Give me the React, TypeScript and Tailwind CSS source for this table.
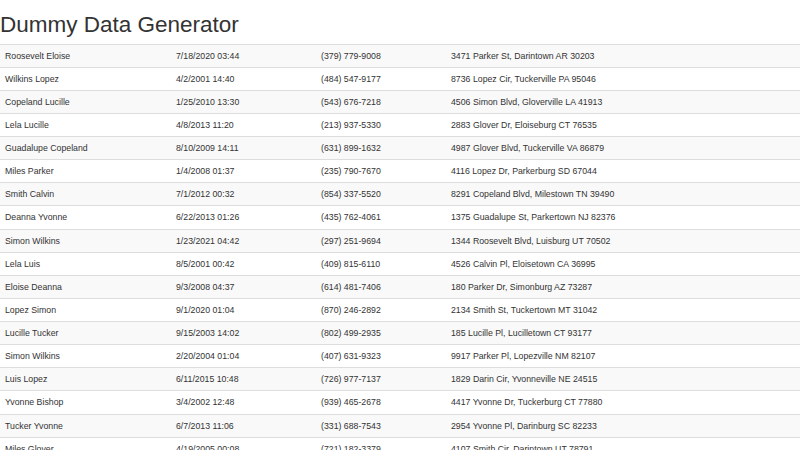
const rows: [string, string, string, string][] = [
  ["Roosevelt Eloise", "7/18/2020 03:44", "(379) 779-9008", "3471 Parker St, Darintown AR 30203"],
  ["Wilkins Lopez", "4/2/2001 14:40", "(484) 547-9177", "8736 Lopez Cir, Tuckerville PA 95046"],
  ["Copeland Lucille", "1/25/2010 13:30", "(543) 676-7218", "4506 Simon Blvd, Gloverville LA 41913"],
  ["Lela Lucille", "4/8/2013 11:20", "(213) 937-5330", "2883 Glover Dr, Eloiseburg CT 76535"],
  ["Guadalupe Copeland", "8/10/2009 14:11", "(631) 899-1632", "4987 Glover Blvd, Tuckerville VA 86879"],
  ["Miles Parker", "1/4/2008 01:37", "(235) 790-7670", "4116 Lopez Dr, Parkerburg SD 67044"],
  ["Smith Calvin", "7/1/2012 00:32", "(854) 337-5520", "8291 Copeland Blvd, Milestown TN 39490"],
  ["Deanna Yvonne", "6/22/2013 01:26", "(435) 762-4061", "1375 Guadalupe St, Parkertown NJ 82376"],
  ["Simon Wilkins", "1/23/2021 04:42", "(297) 251-9694", "1344 Roosevelt Blvd, Luisburg UT 70502"],
  ["Lela Luis", "8/5/2001 00:42", "(409) 815-6110", "4526 Calvin Pl, Eloisetown CA 36995"],
  ["Eloise Deanna", "9/3/2008 04:37", "(614) 481-7406", "180 Parker Dr, Simonburg AZ 73287"],
  ["Lopez Simon", "9/1/2020 01:04", "(870) 246-2892", "2134 Smith St, Tuckertown MT 31042"],
  ["Lucille Tucker", "9/15/2003 14:02", "(802) 499-2935", "185 Lucille Pl, Lucilletown CT 93177"],
  ["Simon Wilkins", "2/20/2004 01:04", "(407) 631-9323", "9917 Parker Pl, Lopezville NM 82107"],
  ["Luis Lopez", "6/11/2015 10:48", "(726) 977-7137", "1829 Darin Cir, Yvonneville NE 24515"],
  ["Yvonne Bishop", "3/4/2002 12:48", "(939) 465-2678", "4417 Yvonne Dr, Tuckerburg CT 77880"],
  ["Tucker Yvonne", "6/7/2013 11:06", "(331) 688-7543", "2954 Yvonne Pl, Darinburg SC 82233"],
  ["Miles Glover", "4/19/2005 00:08", "(721) 182-3379", "4107 Smith Cir, Darintown UT 78791"],
];

export default function App() {
  return (
    <div className="h-[450px] w-[800px] overflow-hidden bg-white text-[#333] font-['Liberation_Sans',Arial,sans-serif]">
      <h1 className="mt-[12.5px] mb-[6.25px] text-[22.5px] leading-[24.75px] font-normal">
        Dummy Data Generator
      </h1>
      <table className="w-full border-collapse text-[8.75px]">
        <tbody>
          {rows.map((r, i) => (
            <tr key={i} className={i % 2 === 0 ? "bg-[#f9f9f9]" : "bg-white"}>
              <td className="w-[171px] border-t border-[#ddd] px-[5px] py-[5px] leading-[12.125px]">{r[0]}</td>
              <td className="w-[145px] border-t border-[#ddd] px-[5px] py-[5px] leading-[12.125px]">{r[1]}</td>
              <td className="w-[130px] border-t border-[#ddd] px-[5px] py-[5px] leading-[12.125px]">{r[2]}</td>
              <td className="border-t border-[#ddd] px-[5px] py-[5px] leading-[12.125px]">{r[3]}</td>
            </tr>
          ))}
        </tbody>
      </table>
    </div>
  );
}
